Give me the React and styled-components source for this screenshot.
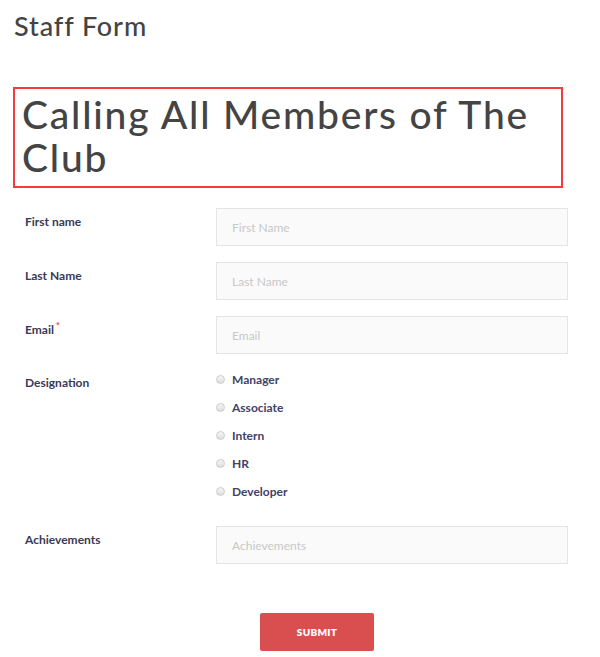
import React from 'react'
import styled, { createGlobalStyle } from 'styled-components'

const GlobalStyle = createGlobalStyle`
  body {
    margin: 0;
    background: #ffffff;
    font-family: "Lato", "Open Sans", sans-serif;
  }
`

const Page = styled.div`
  width: 600px;
  padding: 10px 0 0 13px;
  box-sizing: border-box;
`

const Title = styled.h1`
  margin: 0 0 0 1px;
  font-family: "Lato", sans-serif;
  font-weight: 500;
  font-size: 27px;
  line-height: 32px;
  color: #444444;
  letter-spacing: 0.9px;
`

const Headline = styled.div`
  margin-top: 45px;
  width: 550px;
  height: 101px;
  box-sizing: border-box;
  border: 2px solid #f23c3c;
  padding: 4px 8px 0 7px;
`

const HeadlineText = styled.h2`
  margin: 0;
  font-family: "Lato", sans-serif;
  font-weight: 500;
  font-size: 39px;
  line-height: 43px;
  color: #444444;
  letter-spacing: 1.8px;
`

const Form = styled.form`
  margin-top: 20px;
  padding-left: 12px;
  display: flex;
  flex-direction: column;
`

const Row = styled.div`
  display: grid;
  grid-template-columns: 191px 352px;
  margin-bottom: ${p => p.gap || 16}px;
`

const Label = styled.label`
  font-family: "Lato", sans-serif;
  font-weight: 700;
  font-size: 12px;
  color: #3a3a55;
  padding-top: ${p => p.top || 6}px;
`

const Required = styled.span`
  color: #e23b3b;
  font-size: 9px;
  vertical-align: top;
  margin-left: 2px;
  position: relative;
  top: -2px;
`

const Input = styled.input`
  box-sizing: border-box;
  width: 352px;
  height: 38px;
  border: 1px solid #e4e4e4;
  background: #fafafa;
  padding: 0 15px;
  font-family: "Lato", sans-serif;
  font-size: 12px;
  color: #555;
  outline: none;
  &::placeholder {
    color: #c8c8c8;
  }
`

const RadioList = styled.div`
  display: flex;
  flex-direction: column;
  gap: 12px;
  margin-top: -3px;
`

const RadioItem = styled.label`
  display: flex;
  align-items: center;
  gap: 7px;
  font-family: "Lato", sans-serif;
  font-weight: 700;
  font-size: 12px;
  color: #424266;
  height: 16px;
`

const RadioDot = styled.span`
  width: 7px;
  height: 7px;
  border-radius: 50%;
  border: 1px solid #cbcbcb;
  background: linear-gradient(#f6f6f6, #dedede);
  flex-shrink: 0;
`

const SubmitWrap = styled.div`
  display: flex;
  padding-left: 235px;
  margin-top: 33px;
`

const SubmitButton = styled.button`
  width: 114px;
  height: 38px;
  border: none;
  border-radius: 2px;
  background: #d94f4f;
  color: #ffffff;
  font-family: "Lato", sans-serif;
  font-weight: 800;
  font-size: 10px;
  letter-spacing: 0.3px;
  cursor: pointer;
`

const designations = ['Manager', 'Associate', 'Intern', 'HR', 'Developer']

export default function App() {
  return (
    <Page>
      <GlobalStyle />
      <Title>Staff Form</Title>
      <Headline>
        <HeadlineText>Calling All Members of The Club</HeadlineText>
      </Headline>
      <Form onSubmit={e => e.preventDefault()}>
        <Row>
          <Label>First name</Label>
          <Input placeholder="First Name" />
        </Row>
        <Row>
          <Label>Last Name</Label>
          <Input placeholder="Last Name" />
        </Row>
        <Row gap={20}>
          <Label>Email<Required>*</Required></Label>
          <Input placeholder="Email" />
        </Row>
        <Row gap={27}>
          <Label top={1}>Designation</Label>
          <RadioList>
            {designations.map(d => (
              <RadioItem key={d}>
                <RadioDot />
                {d}
              </RadioItem>
            ))}
          </RadioList>
        </Row>
        <Row gap={0}>
          <Label>Achievements</Label>
          <Input placeholder="Achievements" />
        </Row>
        <SubmitWrap>
          <SubmitButton type="submit">SUBMIT</SubmitButton>
        </SubmitWrap>
      </Form>
    </Page>
  )
}
